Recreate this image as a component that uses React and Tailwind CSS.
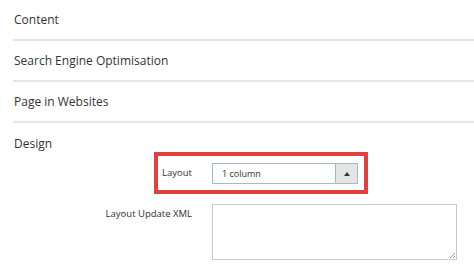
const sections = ["Content", "Search Engine Optimisation", "Page in Websites"];

export default function App() {
  return (
    <div className="w-[474px] h-[271px] overflow-hidden bg-white text-[#333] font-['Open_Sans',sans-serif]">
      <div className="pl-[13px]">
        {sections.map((s) => (
          <div key={s} className="h-[41px] border-b-2 border-[#e6e6e6] flex items-center pl-[1px] pt-[1px] text-[12px]">
            {s}
          </div>
        ))}
        <div className="h-[40px] flex items-center pl-[1px] pt-[1px] text-[12px]">Design</div>
      </div>

      <div className="flex flex-col gap-[20px]">
        <div className="relative flex items-center h-[21px]">
          <div className="w-[192px] text-right text-[9.5px] font-medium text-[#303030]">Layout</div>
          <div className="ml-[20px] w-[146px] h-[21px] flex border border-[#8cc1e6] bg-white">
            <div className="flex-1 flex items-center pl-[9px] text-[9px] text-[#333]">1 column</div>
            <div className="w-[22px] border-l border-[#8cc1e6] bg-[#e5e5e5] flex items-center justify-center">
              <svg width="6" height="4" viewBox="0 0 6 4">
                <path d="M0 4 L3 0 L6 4 Z" fill="#333" />
              </svg>
            </div>
          </div>
          <div className="absolute left-[154px] top-[-11px] w-[214px] h-[42px] border-[4px] border-[#e2403e]" />
        </div>

        <div className="flex items-start">
          <div className="w-[192px] text-right text-[9.5px] font-medium text-[#303030] pt-[3px]">Layout Update XML</div>
          <div className="relative ml-[20px] w-[245px] h-[56px] border border-[#c8c8c8] bg-white">
            <svg className="absolute right-0 bottom-0" width="7" height="7" viewBox="0 0 7 7">
              <path d="M6 1 L1 6 M6 4 L4 6" stroke="#999" strokeWidth="1" />
            </svg>
          </div>
        </div>
      </div>
    </div>
  );
}
